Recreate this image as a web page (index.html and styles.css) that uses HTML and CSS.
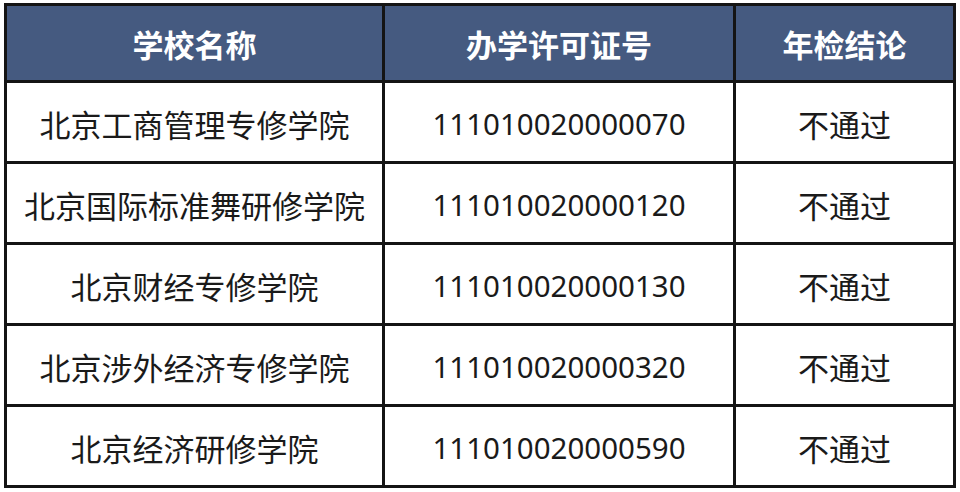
FILE: index.html
```html
<!DOCTYPE html>
<html lang="zh-CN">
<head>
<meta charset="utf-8">
<link rel="stylesheet" href="styles.css">
</head>
<body>
<div class="table">
  <div class="cell head">学校名称</div>
  <div class="cell head">办学许可证号</div>
  <div class="cell head">年检结论</div>

  <div class="cell">北京工商管理专修学院</div>
  <div class="cell num">111010020000070</div>
  <div class="cell">不通过</div>

  <div class="cell">北京国际标准舞研修学院</div>
  <div class="cell num">111010020000120</div>
  <div class="cell">不通过</div>

  <div class="cell">北京财经专修学院</div>
  <div class="cell num">111010020000130</div>
  <div class="cell">不通过</div>

  <div class="cell">北京涉外经济专修学院</div>
  <div class="cell num">111010020000320</div>
  <div class="cell">不通过</div>

  <div class="cell">北京经济研修学院</div>
  <div class="cell num">111010020000590</div>
  <div class="cell">不通过</div>
</div>
</body>
</html>
```

FILE: styles.css
```css
html, body {
  margin: 0;
  padding: 0;
  background: #ffffff;
}

body {
  width: 960px;
  height: 492px;
  overflow: hidden;
  font-family: "Noto Sans CJK SC", "Noto Sans", sans-serif;
}

.table {
  margin: 3px 0 0 4px;
  width: 952px;
  box-sizing: border-box;
  display: grid;
  grid-template-columns: 375px 348px 217px;
  grid-template-rows: 74px repeat(5, 78px);
  gap: 3px;
  padding: 3px;
  background: #141414;
}

.cell {
  background: #ffffff;
  display: flex;
  align-items: center;
  justify-content: center;
  font-size: 31px;
  color: #1a1a1a;
  white-space: nowrap;
  padding-top: 2px;
  box-sizing: border-box;
}

.cell.head {
  background: #455a80;
  color: #ffffff;
  font-weight: 700;
  padding-top: 0;
}

.cell.num {
  font-family: "Noto Sans", "Open Sans", sans-serif;
  font-size: 29.5px;
}
```
